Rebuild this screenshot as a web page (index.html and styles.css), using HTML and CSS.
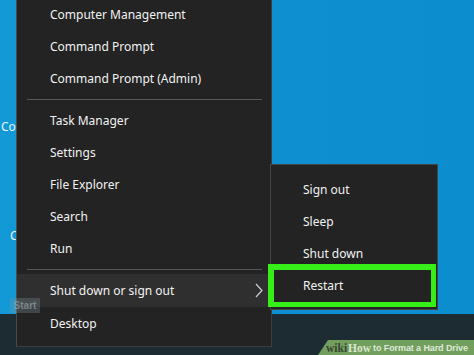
FILE: index.html
```html
<!DOCTYPE html>
<html lang="en">
<head>
<meta charset="utf-8">
<title>Power user menu</title>
<link rel="stylesheet" href="styles.css">
</head>
<body>
<div class="screen">
  <div class="desktop">
    <span class="desk-label desk-label-1">Co</span>
    <span class="desk-label desk-label-2">C</span>
  </div>
  <div class="taskbar"></div>

  <nav class="winx">
    <div class="item">Computer Management</div>
    <div class="item">Command Prompt</div>
    <div class="item">Command Prompt (Admin)</div>
    <div class="sep"></div>
    <div class="item">Task Manager</div>
    <div class="item">Settings</div>
    <div class="item">File Explorer</div>
    <div class="item">Search</div>
    <div class="item">Run</div>
    <div class="sep"></div>
    <div class="item item-active">
      <span>Shut down or sign out</span>
      <svg class="chev" width="8" height="15" viewBox="0 0 8 15"><path d="M1 1 L7 7.5 L1 14" fill="none" stroke="#cfcfcf" stroke-width="1.2"/></svg>
    </div>
    <div class="item">Desktop</div>
  </nav>

  <div class="start-tip">Start</div>

  <div class="submenu">
    <div class="item sub-item">Sign out</div>
    <div class="item sub-item">Sleep</div>
    <div class="item sub-item">Shut down</div>
    <div class="item sub-item">Restart</div>
  </div>
  <div class="highlight"></div>

  <div class="badge"><span class="wiki">wiki</span><span class="how">How</span><span class="title">to Format a Hard Drive</span></div>
</div>
</body>
</html>
```

FILE: styles.css
```css
html, body {
  margin: 0;
  padding: 0;
  background: #0d8ecf;
}

.screen {
  position: relative;
  width: 474px;
  height: 355px;
  overflow: hidden;
  display: grid;
  grid-template-rows: 314px 41px;
  font-family: "Noto Sans", "Open Sans", sans-serif;
}

.desktop {
  position: relative;
  background: linear-gradient(90deg, #1399d6 0%, #0d8fd0 60%, #0c8dce 100%);
}

.desk-label {
  position: absolute;
  left: 1px;
  color: #e6f4fb;
  font-size: 12px;
  line-height: 14px;
}
.desk-label-1 { top: 120px; }
.desk-label-2 { top: 229px; left: 10px; }

.taskbar {
  background: #1d2b33;
}

.winx {
  position: absolute;
  left: 16px;
  top: -2px;
  width: 254px;
  padding-bottom: 7px;
  background: #232323;
  border-left: 1px solid #4a4a4a;
  border-right: 1px solid #3c3c3c;
  border-bottom: 1px solid #3c3c3c;
  display: flex;
  flex-direction: column;
}

.item {
  height: 32px;
  display: flex;
  align-items: center;
  padding-left: 33px;
  color: #f2f2f2;
  font-size: 12px;
  white-space: nowrap;
}

.item-active {
  background: #2f2f2f;
  justify-content: space-between;
  padding-right: 8px;
  height: 33px;
}

.chev {
  display: block;
}

.sep {
  height: 10px;
  display: flex;
  align-items: center;
  padding: 0 9px 0 10px;
}
.sep::before {
  content: "";
  flex: 1;
  height: 1px;
  background: #575757;
}

.start-tip {
  position: absolute;
  left: 10px;
  top: 298px;
  width: 30px;
  height: 15px;
  background: rgba(130, 150, 160, 0.3);
  color: rgba(160, 175, 180, 0.6);
  font-family: "Liberation Sans", Arial, sans-serif;
  font-size: 10px;
  font-weight: bold;
  line-height: 15px;
  text-align: center;
}

.submenu {
  position: absolute;
  left: 270px;
  top: 164px;
  width: 166px;
  padding-top: 8px;
  padding-bottom: 8px;
  background: #232323;
  border: 1px solid #454545;
  display: flex;
  flex-direction: column;
}

.sub-item {
  padding-left: 32px;
}

.highlight {
  position: absolute;
  left: 268px;
  top: 264px;
  width: 157px;
  height: 32px;
  border: 6px solid #36ee18;
  border-right-width: 5px;
  border-bottom-width: 5px;
}

.badge {
  position: absolute;
  right: 0;
  bottom: 0;
  width: 148px;
  height: 15px;
  padding-left: 8px;
  background: #729e5e;
  clip-path: polygon(10px 0, 100% 0, 100% 100%, 0 100%);
  display: flex;
  align-items: center;
  gap: 2px;
  font-family: "Liberation Sans", Arial, sans-serif;
  font-size: 9px;
  font-weight: bold;
  letter-spacing: -0.1px;
  white-space: nowrap;
}
.badge .wiki {
  font-family: "Liberation Serif", "Times New Roman", serif;
  font-size: 11.5px;
  letter-spacing: 0;
  color: #3a4632;
  margin-right: -1px;
}
.badge .how {
  font-family: "Liberation Serif", "Times New Roman", serif;
  font-size: 11.5px;
  letter-spacing: 0;
  color: #d9e6d0;
}
.badge .title {
  color: #dfe9d9;
}
```
